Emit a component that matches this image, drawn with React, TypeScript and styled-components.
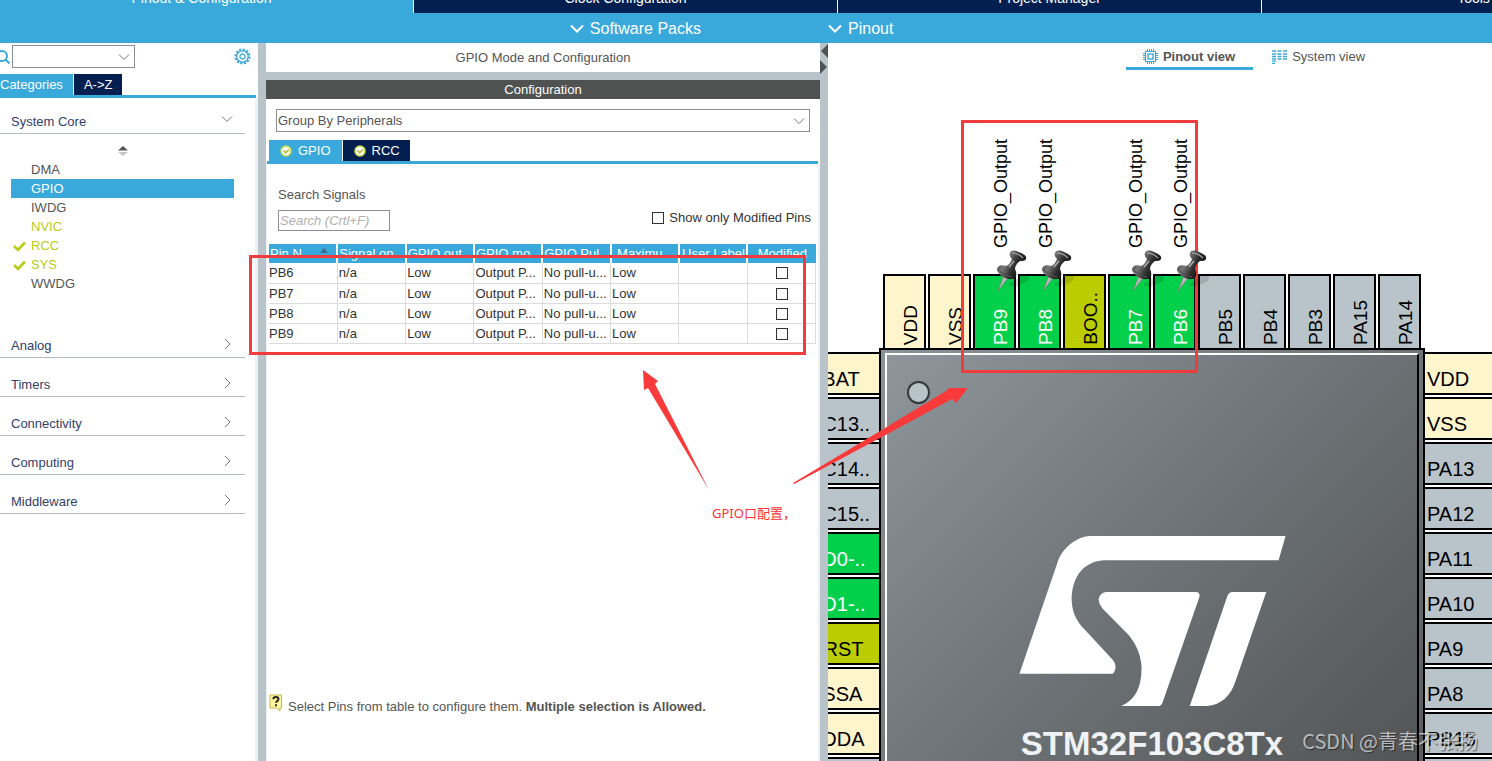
import React from "react";
import styled, { createGlobalStyle, css } from "styled-components";

const c = {
  blue: "#39a9dc",
  navy: "#021f50",
  grey: "#b9c4ca",
  edge: "#eef1f3",
  dark: "#4f5251",
  text: "#555555",
  lime: "#b8cc1a",
  red: "#f03c3c",
  green: "#03d04a",
  cream: "#fff5cc",
  olive: "#bbcc00",
};

const sans = `"Liberation Sans", Arial, "Noto Sans CJK SC", sans-serif`;

const GlobalStyle = createGlobalStyle`
  *, *::before, *::after { box-sizing: border-box; }
  body { margin: 0; background: #fff; }
  button, input, select { font: inherit; color: inherit; border-radius: 0; margin: 0; }
  button { border: 0; padding: 0; background: none; text-align: left; cursor: pointer; }
  h1, h2, p { margin: 0; font: inherit; }
  svg { flex: none; }
`;

/* ---------- page frame ---------- */

const Page = styled.div`
  position: relative;
  height: 100vh;
  overflow: hidden;
  display: flex;
  flex-direction: column;
  font: 13px/16px ${sans};
  color: ${c.text};
  background: #fff;
`;

const MainTabs = styled.nav`
  flex: none;
  height: 13px;
  margin: 0 -193px 0 -10px;
  display: flex;
  align-items: flex-end;
  gap: 1px;
`;

const MainTab = styled.button<{ $active?: boolean }>`
  flex: 1;
  height: 28px;
  padding-bottom: 2px;
  font-size: 14px;
  line-height: 20px;
  text-align: center;
  color: #fff;
  background: ${(p) => (p.$active ? c.blue : c.navy)};
`;

const columns = css`
  display: grid;
  grid-template-columns: 258px 8px minmax(0, 554fr) 8px minmax(0, 664fr);
`;

const MenuBar = styled.div`
  ${columns}
  flex: none;
  height: 30px;
  align-items: center;
  background: ${c.blue};
`;

const MenuButton = styled.button<{ $column: string; $centered?: boolean }>`
  grid-column: ${(p) => p.$column};
  justify-self: ${(p) => (p.$centered ? "end" : "start")};
  margin-right: ${(p) => (p.$centered ? "119px" : "0")};
  display: flex;
  align-items: center;
  gap: 6px;
  padding-top: 1px;
  font-size: 16px;
  line-height: 20px;
  color: #fff;
`;

const Workspace = styled.main`
  ${columns}
  flex: 1;
  min-height: 0;
`;

const Divider = styled.div`
  background: ${c.grey};
`;

/* ---------- category panel ---------- */

const SidePanel = styled.aside`
  display: flex;
  flex-direction: column;
  min-height: 0;
`;

const FilterRow = styled.div`
  display: flex;
  align-items: center;
  height: 31px;
  padding-right: 7px;
  padding-bottom: 4px;
`;

const FilterIcon = styled.label`
  width: 12px;
  height: 16px;
  padding-right: 2px;
  display: flex;
  justify-content: flex-end;
  overflow: hidden;
`;

const SelectFrame = styled.div`
  position: relative;
  display: flex;
  color: ${c.text};
`;

const Select = styled.select<{ $width: string }>`
  appearance: none;
  width: ${(p) => p.$width};
  height: 23px;
  padding: 0 20px 0 1px;
  border: 1px solid #8c8c98;
  background: #fff;
`;

const SelectArrow = styled.span`
  position: absolute;
  right: 5px;
  top: 8px;
  display: flex;
  pointer-events: none;
`;

const IconButton = styled.button`
  margin-left: auto;
  display: flex;
`;

const Tabs = styled.div<{ $inset?: boolean }>`
  display: flex;
  gap: 1px;
  margin-right: ${(p) => (p.$inset ? "0" : "2px")};
  padding-left: ${(p) => (p.$inset ? "2px" : "0")};
  border-bottom: 3px solid ${c.blue};
`;

const Tab = styled.button<{ $active?: boolean; $pad: string }>`
  display: flex;
  align-items: center;
  gap: 6px;
  height: 21px;
  padding: ${(p) => p.$pad};
  line-height: 20px;
  color: #fff;
  background: ${(p) => (p.$active ? c.blue : c.navy)};
`;

const Categories = styled.div`
  flex: 1;
  padding: 9px 10px 0 0;
  border-right: 3px solid ${c.edge};
`;

const CategoryHeader = styled.button`
  display: flex;
  align-items: center;
  justify-content: space-between;
  width: 100%;
  height: 39px;
  padding: 16px 12px 0 11px;
  border-bottom: 1px solid #b4bac2;
  color: #33406b;

  &:first-child { height: 27px; padding-top: 3px; }
  svg { margin-bottom: 5px; }
`;

const Peripherals = styled.div`
  height: 185px;
  padding: 11px 11px 0 11px;
`;

const Sorter = styled.button`
  display: flex;
  height: 15px;
  width: 10px;
  margin: 0 auto;
`;

const Peripheral = styled.button<{ $tone?: "active" | "set" }>`
  display: grid;
  grid-template-columns: 20px 1fr;
  align-items: center;
  width: 100%;
  height: 19px;
  color: ${(p) => (p.$tone === "active" ? "#fff" : p.$tone === "set" ? c.lime : c.text)};
  background: ${(p) => (p.$tone === "active" ? c.blue : "none")};
  svg { display: block; }
`;

/* ---------- configuration panel ---------- */

const ConfigPanel = styled.section`
  display: flex;
  flex-direction: column;
  min-width: 0;
  min-height: 0;
`;

const PanelTitle = styled.h1`
  height: 29px;
  line-height: 29px;
  text-align: center;
`;

const PanelSubtitle = styled.h2`
  height: 27px;
  line-height: 19px;
  border-top: 8px solid ${c.grey};
  text-align: center;
  color: #fff;
  background: ${c.dark};
`;

const ConfigBody = styled.div`
  flex: 1;
  display: flex;
  flex-direction: column;
  padding: 10px 2px 0 1px;
`;

const GroupRow = styled.div`
  padding: 0 8px 8px 9px;
`;

const ConfigContent = styled.div`
  flex: 1;
  display: flex;
  flex-direction: column;
  padding: 23px 2px 46px;
  box-shadow: -1px 0 ${c.edge}, 2px 0 ${c.edge};
`;

const SearchArea = styled.div`
  display: flex;
  justify-content: space-between;
  align-items: flex-end;
  padding: 0 5px 13px 9px;
`;

const SearchLabel = styled.label`
  display: flex;
  flex-direction: column;
  gap: 7px;
`;

const SearchInput = styled.input`
  width: 112px;
  height: 21px;
  padding: 0 1px;
  border: 1px solid #8c8c98;
  &::placeholder { color: #b0b0b0; font-style: italic; }
`;

const CheckLabel = styled.label`
  display: flex;
  align-items: center;
  gap: 5px;
  margin-bottom: 5px;
  color: #333;
`;

const CheckBox = styled.input.attrs({ type: "checkbox" })`
  appearance: none;
  display: block;
  width: 12px;
  height: 12px;
  border: 1px solid #333;
  background: #fff;
`;

const Table = styled.table`
  width: 100%;
  table-layout: fixed;
  border-collapse: collapse;
  color: #333;
`;

const HeadCell = styled.th<{ $center?: boolean }>`
  position: relative;
  height: 19px;
  padding: 0 0 0 1px;
  font-weight: normal;
  line-height: 19px;
  text-align: ${(p) => (p.$center ? "center" : "left")};
  color: #fff;
  background: ${c.blue};
  white-space: nowrap;
  border-left: 2px solid #fff;
  &:first-child { border-left: 0; }
`;

const SortMark = styled.svg`
  position: absolute;
  right: 8px;
  top: 4px;
`;

const Cell = styled.td`
  height: 20px;
  padding: 1px 0 0 1px;
  line-height: 18px;
  border-right: 1px solid #dcdcdc;
  border-bottom: 1px solid #dcdcdc;
  white-space: nowrap;
  &:first-child { padding-left: 0; }
  ${CheckBox} { margin: 0 auto; }
`;

const Hint = styled.p`
  display: flex;
  align-items: flex-end;
  gap: 5px;
  margin-top: auto;
  svg { margin-bottom: 3px; }
`;

/* ---------- pinout view ---------- */

const PinoutPanel = styled.section`
  position: relative;
  overflow: hidden;
`;

const ViewTabs = styled.div`
  display: flex;
  justify-content: center;
  gap: 12px;
  padding-left: 178px;
`;

const ViewTab = styled.button<{ $active?: boolean }>`
  display: flex;
  align-items: center;
  gap: 5px;
  height: 27px;
  padding: ${(p) => (p.$active ? "3px 18px 0 17px" : "3px 7px 0")};
  font-weight: ${(p) => (p.$active ? "bold" : "normal")};
  border-bottom: 3px solid ${(p) => (p.$active ? c.blue : "transparent")};
`;

const Diagram = styled.div`
  position: absolute;
  left: -25px;
  top: 231px;
  font-size: 20px;
  line-height: 24px;
  color: #000;
`;

const ChipRow = styled.div`
  display: flex;
  align-items: flex-start;
`;

const TopPins = styled.div`
  display: flex;
  gap: 2px;
  padding-left: 80px;
`;

const SidePins = styled.div`
  display: flex;
  flex-direction: column;
  gap: 2px;
  padding-top: 4px;
`;

type Kind = "power" | "io" | "used" | "boot";
const fills: Record<Kind, string> = { power: c.cream, io: c.grey, used: c.green, boot: c.olive };

const pinBase = css<{ $kind: Kind }>`
  border: 2px solid #000;
  background: ${(p) => fills[p.$kind]};
  color: ${(p) => (p.$kind === "used" ? "#fff" : "#000")};
  white-space: nowrap;
`;

const SidePin = styled.div<{ $kind: Kind; $side: "left" | "right" }>`
  ${pinBase}
  width: 76px;
  height: 43px;
  padding: ${(p) => (p.$side === "left" ? "13px 0 0 4px" : "13px 0 0 2px")};
  ${(p) => (p.$side === "left" ? "border-right: 0" : "border-left: 0")};
`;

const TopPin = styled.div<{ $kind: Kind }>`
  ${pinBase}
  position: relative;
  width: 43px;
  height: 74px;
  border-bottom: 0;
`;

const upward = css`
  position: absolute;
  left: 14px;
  writing-mode: vertical-rl;
  transform: rotate(180deg);
  white-space: nowrap;
`;

const PinName = styled.span`
  ${upward}
  bottom: 3px;
  font-size: 19px;
`;

const PinSignal = styled.span`
  ${upward}
  bottom: 100px;
  font-size: 18px;
  color: #000;
`;

const PushPin = styled.svg`
  position: absolute;
  left: 17px;
  top: -27px;
  z-index: 1;
`;

const Chip = styled.div`
  width: 546px;
  height: 546px;
  padding: 3px 4px 4px;
  border: 2px solid #000;
  background: linear-gradient(135deg, #8b9398, #555);
`;

const ChipFace = styled.div`
  height: 100%;
  display: flex;
  flex-direction: column;
  align-items: center;
  border: 2px solid;
  border-color: #fff #000 #000 #fff;
  background: linear-gradient(135deg, #8e969b 0%, #6d7376 45%, #4c4c4c 100%);
`;

const PinOneMark = styled.span`
  align-self: flex-start;
  width: 23px;
  height: 23px;
  margin: 26px 0 0 20px;
  border: 2px solid #333a3e;
  border-radius: 50%;
  background: ${c.grey};
`;

const Logo = styled.svg`
  margin-top: 132px;
`;

const ChipName = styled.span`
  margin-top: 19px;
  font-size: 33px;
  line-height: 38px;
  font-weight: bold;
  color: #f0f2f5;
`;

/* ---------- annotations ---------- */

const Annotations = styled.svg`
  position: absolute;
  left: 0;
  top: 0;
  pointer-events: none;
`;

const Note = styled.span`
  position: absolute;
  left: 712px;
  top: 503px;
  font: 13px/20px "Noto Sans", "Noto Sans CJK SC", sans-serif;
  color: #f33;
`;

const Watermark = styled.span`
  position: absolute;
  right: 14px;
  bottom: 7px;
  font: 20px/26px "Noto Sans CJK SC", sans-serif;
  color: rgba(225, 228, 230, 0.75);
  text-shadow: 1px 1px 1px rgba(0, 0, 0, 0.5);
`;

/* ---------- drawings ---------- */

const DownChevron = ({ w = 10, color = "#777", weight = 1 }: { w?: number; color?: string; weight?: number }) => (
  <svg width={w + 2} height={w / 2 + 3} viewBox={`0 0 ${w + 2} ${w / 2 + 3}`} fill="none" stroke={color} strokeWidth={weight}>
    <path d={`M1 1.5l${w / 2} ${w / 2} ${w / 2}-${w / 2}`} />
  </svg>
);

const RightChevron = () => (
  <svg width="11" height="12" viewBox="0 0 11 12" fill="none" stroke="#777">
    <path d="M3 1l5 5-5 5" />
  </svg>
);

const Tick = () => (
  <svg width="16" height="12" viewBox="0 0 16 12" fill="none" stroke={c.lime} strokeWidth="2.6">
    <path d="M3 6l4 4 7-7.5" />
  </svg>
);

const OkBadge = () => (
  <svg width="12" height="12" viewBox="0 0 12 12">
    <circle cx="6" cy="6" r="5" fill="#fff" stroke="#c9d94a" strokeWidth="1.6" />
    <path d="M3.5 5.5l2.2 2.4 3.2-3.4" fill="none" stroke="#b5b83a" strokeWidth="1.6" />
  </svg>
);

const Gear = () => (
  <svg width="17" height="17" viewBox="-8.5 -8.5 17 17" fill="none" stroke={c.blue}>
    <circle r="7" strokeWidth="2" strokeDasharray="2.2 1.465" />
    <circle r="5.7" strokeWidth="1.2" />
    <circle r="2.6" strokeWidth="1.2" />
  </svg>
);

const ChipIcon = () => (
  <svg width="15" height="15" viewBox="0 0 15 15" fill="none" stroke={c.blue}>
    <path d="M4.500 0v15M6.500 0v15M8.500 0v15M10.500 0v15M0 4.500h15M0 6.500h15M0 8.500h15M0 10.500h15" />
    <rect x="2.5" y="2.5" width="10" height="10" fill="#fff" />
    <rect x="5" y="5" width="5" height="5" strokeWidth="1.4" />
  </svg>
);

const SystemIcon = () => (
  <svg width="15" height="14" viewBox="0 0 15 14" stroke={c.blue} strokeWidth="1.3">
    <path d="M0 1h4M5.500 1h4M11 1h4M0 4h4M5.500 4h4M11 4h4M0 6.500h4M5.500 6.500h4M11 6.500h4M0 9h4M5.500 9h4M11 9h4M0 11.200h4M0 13.300h3" />
  </svg>
);

const HelpIcon = () => (
  <svg width="14" height="18" viewBox="0 0 14 18">
    <path d="M1 1h11.5v13H11v3l-3.5-3H1z" fill="#fdf39a" stroke="#c9b64e" />
    <path d="M4.300 5.300c0-3 5.200-3 5.200 0 0 1.800-2.500 1.800-2.500 3.500M7 10.200v2" fill="none" stroke="#222" strokeWidth="1.9" />
  </svg>
);

const Pin = () => (
  <PushPin width="40" height="46" viewBox="0 0 40 46" aria-hidden="true">
    <defs>
      <linearGradient id="pinBody" x1="0" y1="0" x2="1" y2="0.5">
        <stop offset="0" stopColor="#222" />
        <stop offset="0.4" stopColor="#777" />
        <stop offset="0.7" stopColor="#2c2c2c" />
        <stop offset="1" stopColor="#111" />
      </linearGradient>
    </defs>
    <path d="M16 36l14-10 8-2-2 8-12 6z" fill="#000" opacity="0.12" />
    <path d="M12 26l4 3-10 13z" fill="#b8b8b8" stroke="#777" strokeWidth="0.6" />
    <path d="M18 4c1-3 5-3 9-1 5 2 8 4 7 7-1 2-3 2-6 2-3 2-5 5-5 8 2 4 2 9-2 10-6 1-14-3-16-9 0-4 4-6 9-4 3-1 5-4 6-7-2-2-3-4-2-6z" fill="url(#pinBody)" />
    <path d="M20 4c4 0 8 2 11 5" fill="none" stroke="#999" strokeWidth="1.3" />
    <path d="M7 21c3 4 8 6 13 7" fill="none" stroke="#555" strokeWidth="1.2" />
    <path d="M17 18l5-6" stroke="#aaa" strokeWidth="1.6" />
  </PushPin>
);

const StLogo = () => (
  <Logo width="267" height="170" viewBox="56 47 800 511" fill="#fff" role="img" aria-label="ST">
    <path d="M268 47H856L835 120H310C240 125 213 180 213 240C214 278 230 305 250 326L337 420C348 434 347 450 337 461H56L172 122C185 85 225 50 268 47Z" />
    <path d="M315 215H590Q600 218 597 230L487 545Q484 557 474 558H362C405 540 424 500 423 440C421 400 405 370 385 345L305 264Q295 252 294 238Q296 220 315 215Z" />
    <path d="M695 215H798L705 485C690 530 660 555 620 558H568L680 230Q684 216 695 215Z" />
  </Logo>
);

/* ---------- data ---------- */

const mainTabs = ["Pinout & Configuration", "Clock Configuration", "Project Manager", "Tools"];

const peripherals: { name: string; tone?: "active" | "set"; ticked?: boolean }[] = [
  { name: "DMA" },
  { name: "GPIO", tone: "active" },
  { name: "IWDG" },
  { name: "NVIC", tone: "set" },
  { name: "RCC", tone: "set", ticked: true },
  { name: "SYS", tone: "set", ticked: true },
  { name: "WWDG" },
];

const categories = ["Analog", "Timers", "Connectivity", "Computing", "Middleware"];

const headings = ["Pin N...", "Signal on...", "GPIO out...", "GPIO mo...", "GPIO Pul...", "Maximu...", "User Label", "Modified"];
const pinRows = ["PB6", "PB7", "PB8", "PB9"];

const topPins: { name: string; kind: Kind }[] = [
  { name: "VDD", kind: "power" },
  { name: "VSS", kind: "power" },
  { name: "PB9", kind: "used" },
  { name: "PB8", kind: "used" },
  { name: "BOO..", kind: "boot" },
  { name: "PB7", kind: "used" },
  { name: "PB6", kind: "used" },
  { name: "PB5", kind: "io" },
  { name: "PB4", kind: "io" },
  { name: "PB3", kind: "io" },
  { name: "PA15", kind: "io" },
  { name: "PA14", kind: "io" },
];

const leftPins: { name: string; kind: Kind }[] = [
  { name: "VBAT", kind: "power" },
  { name: "PC13..", kind: "io" },
  { name: "PC14..", kind: "io" },
  { name: "PC15..", kind: "io" },
  { name: "PD0-..", kind: "used" },
  { name: "PD1-..", kind: "used" },
  { name: "NRST", kind: "boot" },
  { name: "VSSA", kind: "power" },
  { name: "VDDA", kind: "power" },
  { name: "PA0-..", kind: "io" },
];

const rightPins: { name: string; kind: Kind }[] = [
  { name: "VDD", kind: "power" },
  { name: "VSS", kind: "power" },
  { name: "PA13", kind: "io" },
  { name: "PA12", kind: "io" },
  { name: "PA11", kind: "io" },
  { name: "PA10", kind: "io" },
  { name: "PA9", kind: "io" },
  { name: "PA8", kind: "io" },
  { name: "PB15", kind: "io" },
  { name: "PB14", kind: "io" },
];

export default function App() {
  return (
    <Page>
      <GlobalStyle />
      <MainTabs>
        {mainTabs.map((t, i) => (
          <MainTab key={t} $active={i === 0}>{t}</MainTab>
        ))}
      </MainTabs>
      <MenuBar>
        <MenuButton $column="3" $centered>
          <DownChevron w={12} color="#fff" weight={2} />
          Software Packs
        </MenuButton>
        <MenuButton $column="5">
          <DownChevron w={12} color="#fff" weight={2} />
          Pinout
        </MenuButton>
      </MenuBar>

      <Workspace>
        <SidePanel>
          <FilterRow>
            <FilterIcon htmlFor="filter" aria-label="Find">
              <svg width="15" height="16" viewBox="0 0 15 16" fill="none" stroke={c.blue} strokeWidth="2">
                <circle cx="7" cy="7" r="5" />
                <path d="M10.500 10.500l4 4" />
              </svg>
            </FilterIcon>
            <SelectFrame>
              <Select id="filter" $width="123px" />
              <SelectArrow><DownChevron /></SelectArrow>
            </SelectFrame>
            <IconButton aria-label="Settings"><Gear /></IconButton>
          </FilterRow>
          <Tabs>
            <Tab $active $pad="0 10px 0 0">Categories</Tab>
            <Tab $pad="0 10px">A-&gt;Z</Tab>
          </Tabs>
          <Categories>
            <CategoryHeader>System Core<DownChevron /></CategoryHeader>
            <Peripherals>
              <Sorter aria-label="Sort">
                <svg width="10" height="12" viewBox="0 0 10 12">
                  <path d="M0 5.500L5 1l5 4.500z" fill="#555" />
                  <path d="M0 7h10l-5 4z" fill="#c4c4c4" />
                </svg>
              </Sorter>
              {peripherals.map((p) => (
                <Peripheral key={p.name} $tone={p.tone}>
                  <span>{p.ticked && <Tick />}</span>
                  {p.name}
                </Peripheral>
              ))}
            </Peripherals>
            {categories.map((name) => (
              <CategoryHeader key={name}>{name}<RightChevron /></CategoryHeader>
            ))}
          </Categories>
        </SidePanel>

        <Divider />

        <ConfigPanel>
          <PanelTitle>GPIO Mode and Configuration</PanelTitle>
          <PanelSubtitle>Configuration</PanelSubtitle>
          <ConfigBody>
            <GroupRow>
              <SelectFrame>
                <Select $width="100%" aria-label="Grouping">
                  <option>Group By Peripherals</option>
                </Select>
                <SelectArrow><DownChevron /></SelectArrow>
              </SelectFrame>
            </GroupRow>
            <Tabs $inset>
              <Tab $active $pad="0 11px"><OkBadge />GPIO</Tab>
              <Tab $pad="0 10px 0 11px"><OkBadge />RCC</Tab>
            </Tabs>
            <ConfigContent>
              <SearchArea>
                <SearchLabel>
                  Search Signals
                  <SearchInput placeholder="Search (Crtl+F)" />
                </SearchLabel>
                <CheckLabel><CheckBox />Show only Modified Pins</CheckLabel>
              </SearchArea>
              <Table>
                <thead>
                  <tr>
                    {headings.map((h, i) => (
                      <HeadCell key={h} $center={i > 4}>
                        {h}
                        {i === 0 && (
                          <SortMark width="8" height="5" viewBox="0 0 8 5"><path d="M0 5l4-5 4 5z" fill="#3f6f8c" /></SortMark>
                        )}
                      </HeadCell>
                    ))}
                  </tr>
                </thead>
                <tbody>
                  {pinRows.map((pin) => (
                    <tr key={pin}>
                      <Cell>{pin}</Cell>
                      <Cell>n/a</Cell>
                      <Cell>Low</Cell>
                      <Cell>Output P...</Cell>
                      <Cell>No pull-u...</Cell>
                      <Cell>Low</Cell>
                      <Cell />
                      <Cell><CheckBox aria-label={`${pin} modified`} /></Cell>
                    </tr>
                  ))}
                </tbody>
              </Table>
              <Hint>
                <HelpIcon />
                <span>Select Pins from table to configure them. <b>Multiple selection is Allowed.</b></span>
              </Hint>
            </ConfigContent>
          </ConfigBody>
        </ConfigPanel>

        <Divider>
          <svg width="8" height="34" viewBox="0 0 8 34" fill={c.dark}>
            <path d="M8 1v14L1 8zM0 17v14l7-7z" />
          </svg>
        </Divider>

        <PinoutPanel>
          <ViewTabs>
            <ViewTab $active><ChipIcon />Pinout view</ViewTab>
            <ViewTab><SystemIcon />System view</ViewTab>
          </ViewTabs>
          <Diagram>
            <TopPins>
              {topPins.map((p) => (
                <TopPin key={p.name} $kind={p.kind}>
                  <PinName>{p.name}</PinName>
                  {p.kind === "used" && (
                    <>
                      <PinSignal>GPIO_Output</PinSignal>
                      <Pin />
                    </>
                  )}
                </TopPin>
              ))}
            </TopPins>
            <ChipRow>
              <SidePins>
                {leftPins.map((p) => (
                  <SidePin key={p.name} $kind={p.kind} $side="left">{p.name}</SidePin>
                ))}
              </SidePins>
              <Chip>
                <ChipFace>
                  <PinOneMark />
                  <StLogo />
                  <ChipName>STM32F103C8Tx</ChipName>
                </ChipFace>
              </Chip>
              <SidePins>
                {rightPins.map((p) => (
                  <SidePin key={p.name} $kind={p.kind} $side="right">{p.name}</SidePin>
                ))}
              </SidePins>
            </ChipRow>
          </Diagram>
        </PinoutPanel>
      </Workspace>

      <Annotations width="1200" height="520" viewBox="0 0 1200 520" aria-hidden="true">
        <g fill="none" stroke={c.red} strokeWidth="3">
          <rect x="250.5" y="256.5" width="554" height="97" />
          <rect x="962.5" y="121.5" width="234" height="250" />
        </g>
        <g fill="#f93a3a">
          <path d="M643 370L658 381L655 384L709 490L648 388L644 390Z" />
          <path d="M968 388L956 403L952 399L880 438L794 484L793 483L880 431L946 391L949 388Z" />
        </g>
      </Annotations>
      <Note>GPIO口配置，</Note>
      <Watermark>CSDN @青春不张扬</Watermark>
    </Page>
  );
}
